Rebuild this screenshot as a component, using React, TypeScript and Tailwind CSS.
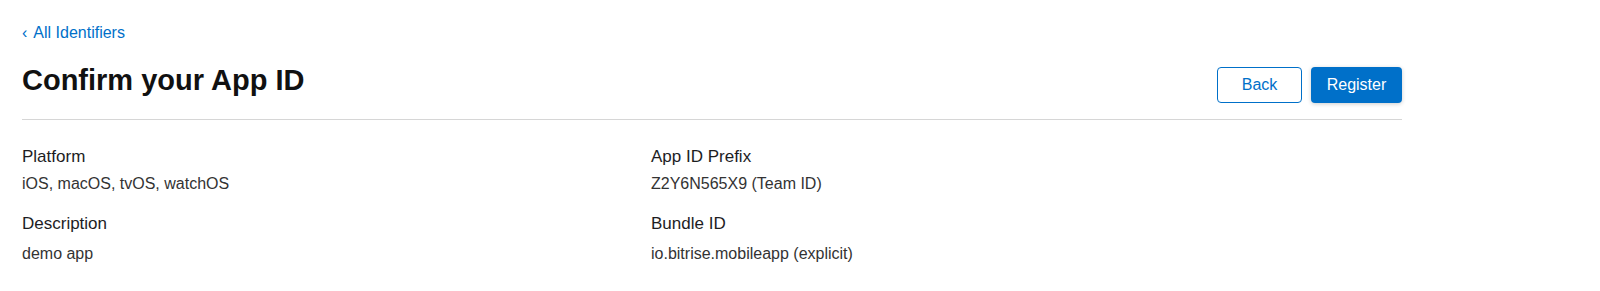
import React from "react";

export default function App() {
  return (
    <div className="min-h-[291px] bg-white" style={{ fontFamily: '"Liberation Sans", Arial, sans-serif' }}>
      <div className="ml-[22px] w-[1380px] pt-[24px]">
        <a className="flex items-center gap-[6px] text-[16px] leading-[18px] text-[#0070c9]" href="#">
          <span className="text-[16px]">‹</span>
          <span>All Identifiers</span>
        </a>
        <div className="mt-[25px] flex items-start justify-between border-b border-[#d6d6d6] pb-[16px]">
          <h1 className="text-[29px] font-bold leading-[26px] text-[#111111]">Confirm your App ID</h1>
          <div className="flex gap-[9px]">
            <button className="h-[36px] w-[85px] rounded-[4px] border border-[#0070c9] bg-white text-[16px] text-[#0070c9]">
              Back
            </button>
            <button className="h-[36px] w-[91px] rounded-[4px] bg-[#0070c9] text-[16px] text-white shadow-[0_1px_4px_rgba(0,0,0,0.2)]">
              Register
            </button>
          </div>
        </div>
        <div className="mt-[27px] flex">
          <div className="w-[629px]">
            <div className="text-[17px] leading-[20px] text-[#1d1d1f]">Platform</div>
            <div className="mt-[7px] text-[16px] leading-[20px] text-[#333333]">iOS, macOS, tvOS, watchOS</div>
            <div className="mt-[20px] text-[17px] leading-[20px] text-[#1d1d1f]">Description</div>
            <div className="mt-[10px] text-[16px] leading-[20px] text-[#333333]">demo app</div>
          </div>
          <div>
            <div className="text-[17px] leading-[20px] text-[#1d1d1f]">App ID Prefix</div>
            <div className="mt-[7px] text-[16px] leading-[20px] text-[#333333]">Z2Y6N565X9 (Team ID)</div>
            <div className="mt-[20px] text-[17px] leading-[20px] text-[#1d1d1f]">Bundle ID</div>
            <div className="mt-[10px] text-[16px] leading-[20px] text-[#333333]">io.bitrise.mobileapp (explicit)</div>
          </div>
        </div>
      </div>
    </div>
  );
}
